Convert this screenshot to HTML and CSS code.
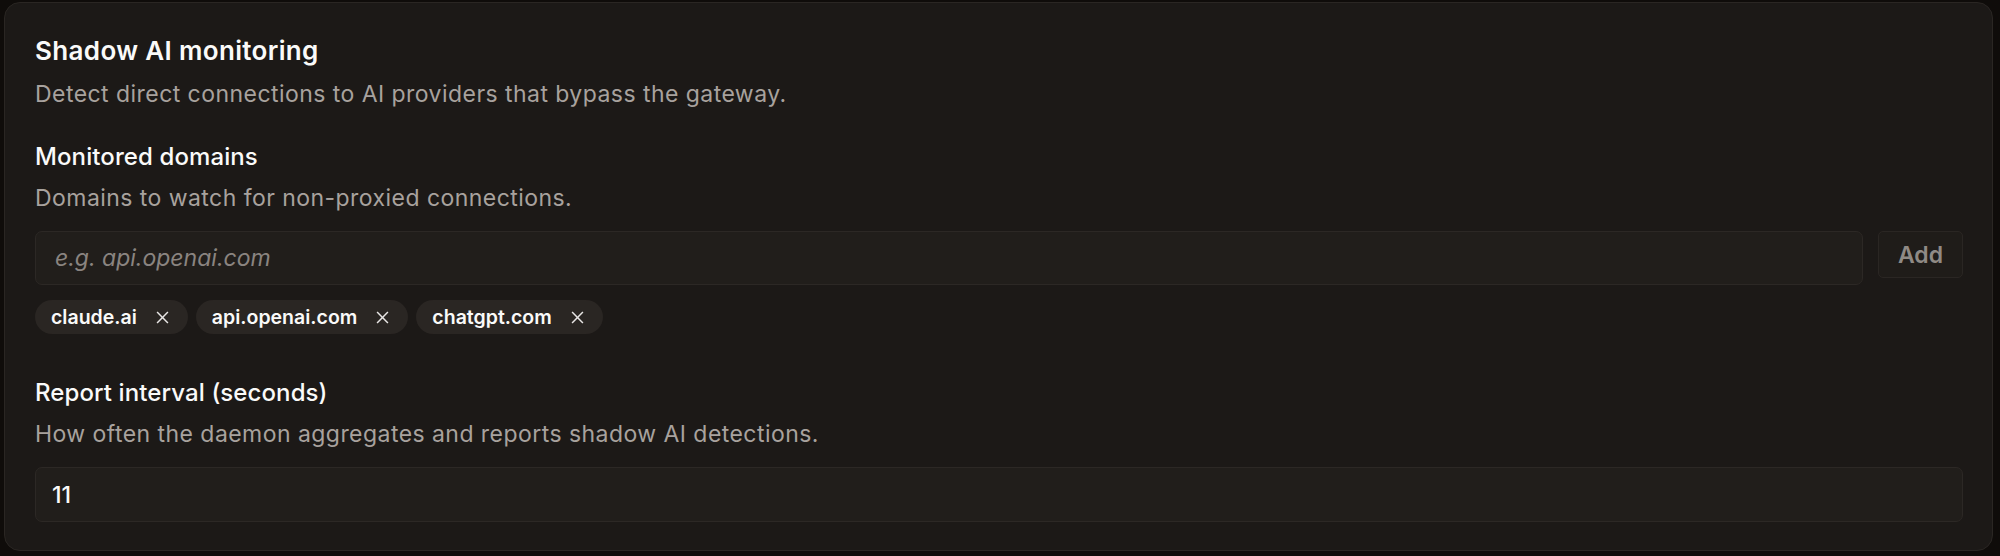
FILE: index.html
```html
<!DOCTYPE html>
<html>
<head>
<meta charset="utf-8">
<link rel="stylesheet" href="styles.css">
</head>
<body>
<section class="card">
  <h2 class="title">Shadow AI monitoring</h2>
  <p class="desc desc-main">Detect direct connections to AI providers that bypass the gateway.</p>

  <div class="field">
    <h3 class="label">Monitored domains</h3>
    <p class="desc">Domains to watch for non-proxied connections.</p>
    <div class="input-row">
      <input class="input" type="text" placeholder="e.g. api.openai.com">
      <button class="btn">Add</button>
    </div>
    <div class="chips">
      <span class="chip">claude.ai<svg class="x" viewBox="0 0 12 12"><path d="M1 1L11 11M11 1L1 11"/></svg></span>
      <span class="chip">api.openai.com<svg class="x" viewBox="0 0 12 12"><path d="M1 1L11 11M11 1L1 11"/></svg></span>
      <span class="chip">chatgpt.com<svg class="x" viewBox="0 0 12 12"><path d="M1 1L11 11M11 1L1 11"/></svg></span>
    </div>
  </div>

  <div class="field field-2">
    <h3 class="label">Report interval (seconds)</h3>
    <p class="desc">How often the daemon aggregates and reports shadow AI detections.</p>
    <input class="input input-num" type="text" value="11">
  </div>
</section>
</body>
</html>
```
FILE: styles.css
```css
* { box-sizing: border-box; }
html, body { margin: 0; }
body {
  background: #0f0c0a;
  padding: 2px 7px 5px 4px;
  font-family: Inter, "Noto Sans", sans-serif;
  color: #fafaf9;
}
.card {
  background: #1c1917;
  border: 1px solid #2a2623;
  border-radius: 16px;
  padding: 31px 29px 28px 30px;
  height: 549px;
}
.title {
  margin: 0;
  font-size: 26px;
  line-height: 34px;
  font-weight: 600;
  letter-spacing: 0.35px;
}
.desc {
  margin: 9px 0 0;
  font-size: 23px;
  line-height: 32px;
  color: #a8a29e;
  letter-spacing: 0.45px;
}
.desc-main { margin-top: 10px; }
.field { margin-top: 31px; }
.field-2 { margin-top: 43px; }
.label {
  margin: 0;
  font-size: 24px;
  line-height: 32px;
  font-weight: 500;
  letter-spacing: 0.1px;
}
.input-row {
  display: flex;
  align-items: flex-start;
  gap: 15px;
  margin-top: 17px;
}
.input {
  flex: 1;
  display: block;
  width: 100%;
  height: 54px;
  background: #211e1b;
  border: 1px solid #2c2825;
  border-radius: 7px;
  padding: 0 19px;
  font-family: inherit;
  font-size: 23px;
  color: #fafaf9;
  outline: none;
}
.input::placeholder {
  color: #8a8480;
  font-style: italic;
}
.input-num {
  margin-top: 17px;
  height: 55px;
  padding: 0 16px;
  font-size: 23px;
  font-weight: 500;
}
.btn {
  flex: none;
  width: 85px;
  height: 47px;
  background: #1f1c19;
  border: 1px solid #2a2623;
  border-radius: 5px;
  font-family: inherit;
  font-size: 23px;
  font-weight: 600;
  color: #8f8a85;
  padding: 0;
}
.chips {
  display: flex;
  gap: 8px;
  margin-top: 15px;
}
.chip {
  display: inline-flex;
  align-items: center;
  height: 34px;
  padding: 0 19px 0 16px;
  gap: 19px;
  background: #2a2623;
  border-radius: 17px;
  font-size: 19.5px;
  font-weight: 600;
  color: #fafaf9;
}
.x {
  width: 13px;
  height: 13px;
  stroke: #e7e5e4;
  stroke-width: 1.4;
  fill: none;
}
```
